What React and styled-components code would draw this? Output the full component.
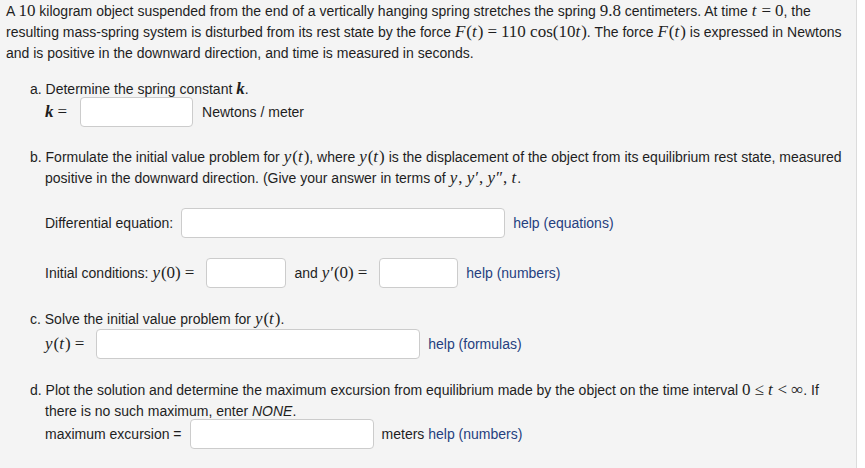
import React from "react";
import styled, { createGlobalStyle } from "styled-components";

const Global = createGlobalStyle`
  html, body {
    margin: 0;
    padding: 0;
    background: #ffffff;
  }
  body {
    font-family: "Liberation Sans", Arial, sans-serif;
    font-size: 14px;
    color: #1e1e1e;
  }
`;

const Page = styled.div`
  width: 857px;
  height: 468px;
  box-sizing: border-box;
  background: #f4f4f4;
  border-right: 1px solid #dcdcdc;
  padding: 1px 0 0 6px;
  overflow: hidden;
`;

const Intro = styled.p`
  margin: 0;
  line-height: 21px;
`;

const Part = styled.div`
  margin: ${p => p.$top || 15}px 0 0 24px;
`;

const PartLine = styled.div`
  line-height: 21px;
  height: 21px;
  white-space: nowrap;
  padding-left: ${p => (p.$indent ? 15 : 0)}px;
`;

const Row = styled.div`
  display: flex;
  align-items: center;
  gap: ${p => p.$gap || 8}px;
  margin: ${p => p.$top || 0}px 0 0 15px;
  height: 30px;
`;

const Field = styled.input`
  box-sizing: border-box;
  width: ${p => p.$w}px;
  height: ${p => p.$h || 30}px;
  border: 1px solid #cccccc;
  border-radius: 4px;
  background: #ffffff;
  padding: 0 6px;
  margin: 0;
  font: inherit;
`;

const Label = styled.span`
  white-space: nowrap;
  line-height: 21px;
`;

const Help = styled.a`
  color: #253f7f;
  text-decoration: none;
  white-space: nowrap;
`;

const M = styled.span`
  font-family: "Liberation Serif", "Times New Roman", serif;
  font-size: 17px;
  line-height: 1;
  white-space: nowrap;
`;

const V = styled.i`
  font-style: italic;
  padding-right: 1px;
`;

const B = styled.b`
  font-weight: 700;
  font-style: italic;
`;

const Eq = styled.span`
  margin: 0 4px;
`;

export default function App() {
  return (
    <>
      <Global />
      <Page>
        <Intro>
          A <M>10</M> kilogram object suspended from the end of a vertically hanging spring
          stretches the spring <M>9.8</M> centimeters. At time <M><V>t</V><Eq>=</Eq>0</M>, the
          resulting mass-spring system is disturbed from its rest state by the force{" "}
          <M><V>F</V>(<V>t</V>)<Eq>=</Eq>110 cos(10<V>t</V>)</M>. The force <M><V>F</V>(<V>t</V>)</M> is
          expressed in Newtons and is positive in the downward direction, and time is measured
          in seconds.
        </Intro>

        <Part $top={15}>
          <PartLine>
            a. Determine the spring constant <M><B>k</B></M>.
          </PartLine>
          <Row $top={-3} $gap={9}>
            <Label>
              <M><B>k</B><Eq>=</Eq></M>
            </Label>
            <Field $w={113} />
            <Label>Newtons / meter</Label>
          </Row>
        </Part>

        <Part $top={20}>
          <PartLine>
            b. Formulate the initial value problem for <M><V>y</V>(<V>t</V>)</M>, where{" "}
            <M><V>y</V>(<V>t</V>)</M> is the displacement of the object from its equilibrium rest
            state, measured
          </PartLine>
          <PartLine $indent>
            positive in the downward direction. (Give your answer in terms of{" "}
            <M><V>y</V>, <V>y</V>′, <V>y</V>″, <V>t</V></M>.
          </PartLine>
          <Row $top={19}>
            <Label>Differential equation:</Label>
            <Field $w={324} />
            <Help href="#">help (equations)</Help>
          </Row>
          <Row $top={20}>
            <Label>
              Initial conditions: <M><V>y</V>(0)<Eq>=</Eq></M>
            </Label>
            <Field $w={80} />
            <Label>
              and <M><V>y</V>′(0)<Eq>=</Eq></M>
            </Label>
            <Field $w={79} />
            <Help href="#">help (numbers)</Help>
          </Row>
        </Part>

        <Part $top={21}>
          <PartLine>
            c. Solve the initial value problem for <M><V>y</V>(<V>t</V>)</M>.
          </PartLine>
          <Row $top={-1}>
            <Label>
              <M><V>y</V>(<V>t</V>)<Eq>=</Eq></M>
            </Label>
            <Field $w={324} />
            <Help href="#">help (formulas)</Help>
          </Row>
        </Part>

        <Part $top={21}>
          <PartLine>
            d. Plot the solution and determine the maximum excursion from equilibrium made by the
            object on the time interval <M>0<Eq>≤</Eq><V>t</V><Eq>&lt;</Eq>∞</M>. If
          </PartLine>
          <PartLine $indent>
            there is no such maximum, enter <i>NONE</i>.
          </PartLine>
          <Row $top={-3}>
            <Label>maximum excursion =</Label>
            <Field $w={184} />
            <Label>
              meters <Help href="#">help (numbers)</Help>
            </Label>
          </Row>
        </Part>
      </Page>
    </>
  );
}
